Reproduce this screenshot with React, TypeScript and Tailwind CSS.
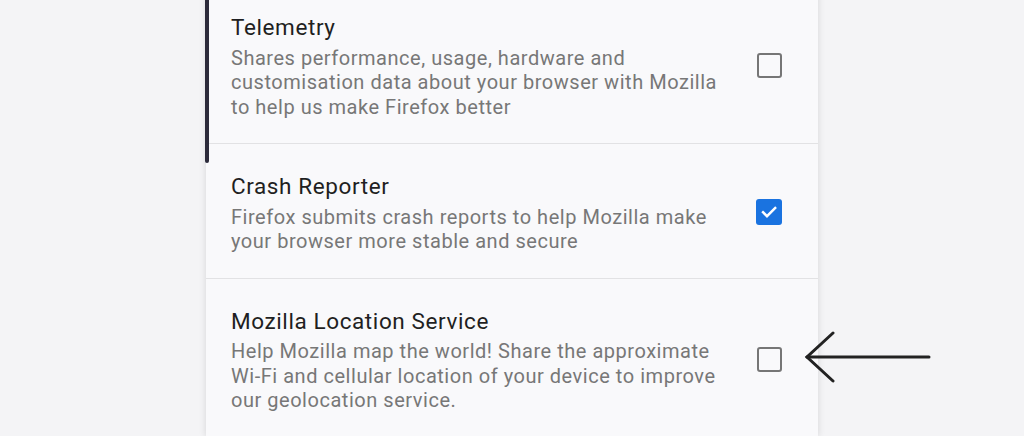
import React from "react"

type Item = {
  title: string
  lines: string[]
  checked: boolean
}

const items: Item[] = [
  {
    title: "Telemetry",
    lines: [
      "Shares performance, usage, hardware and",
      "customisation data about your browser with Mozilla",
      "to help us make Firefox better",
    ],
    checked: false,
  },
  {
    title: "Crash Reporter",
    lines: [
      "Firefox submits crash reports to help Mozilla make",
      "your browser more stable and secure",
    ],
    checked: true,
  },
  {
    title: "Mozilla Location Service",
    lines: [
      "Help Mozilla map the world! Share the approximate",
      "Wi-Fi and cellular location of your device to improve",
      "our geolocation service.",
    ],
    checked: false,
  },
]

function Checkbox({ checked }: { checked: boolean }) {
  if (checked) {
    return (
      <div className="w-[26px] h-[26px] rounded-[3px] bg-[#1a73e0] flex items-center justify-center">
        <svg width="18" height="18" viewBox="0 0 18 18" fill="none">
          <path d="M3 9.2l4 4L15.2 5" stroke="white" strokeWidth="2.4" strokeLinecap="square" />
        </svg>
      </div>
    )
  }
  return <div className="w-[25px] h-[25px] rounded-[3px] border-[2.5px] border-[#767676]" />
}

export default function App() {
  return (
    <div className="relative w-[1024px] h-[436px] overflow-hidden bg-[#f4f4f6] font-['Roboto',sans-serif]">
      <div className="relative ml-[206px] w-[612px] -mt-[15px] bg-[#f9f9fb] shadow-[0_0_7px_rgba(0,0,0,0.13)]">
        {items.map((item, i) => (
          <div
            key={i}
            className={`flex items-center pl-[25px] pr-[36px] pt-[27px] pb-[24px] ${i > 0 ? "border-t border-[#e2e2e4]" : ""}`}
          >
            <div className="flex-1">
              <div className="text-[22.5px] leading-[30px] tracking-[0.6px] text-[#1f1f22] mb-[3.5px]">{item.title}</div>
              <div className="text-[20px] leading-[24.5px] tracking-[0.53px] text-[#777777]">
                {item.lines.map((line, j) => (
                  <div key={j} className="whitespace-nowrap">{line}</div>
                ))}
              </div>
            </div>
            <Checkbox checked={item.checked} />
          </div>
        ))}
        {/* selection indicator */}
        <div className="absolute left-[-1px] top-0 w-[4px] h-[178px] bg-[#2b2a3a] rounded-b-[2px]" />
      </div>

      <svg className="absolute left-[804px] top-[331px]" width="130" height="54" viewBox="0 0 130 54" fill="none">
        <path d="M3 26H125" stroke="#222" strokeWidth="3" strokeLinecap="round" />
        <path d="M29 2L3 26L29 50" stroke="#222" strokeWidth="3" strokeLinecap="round" strokeLinejoin="miter" />
      </svg>
    </div>
  )
}
